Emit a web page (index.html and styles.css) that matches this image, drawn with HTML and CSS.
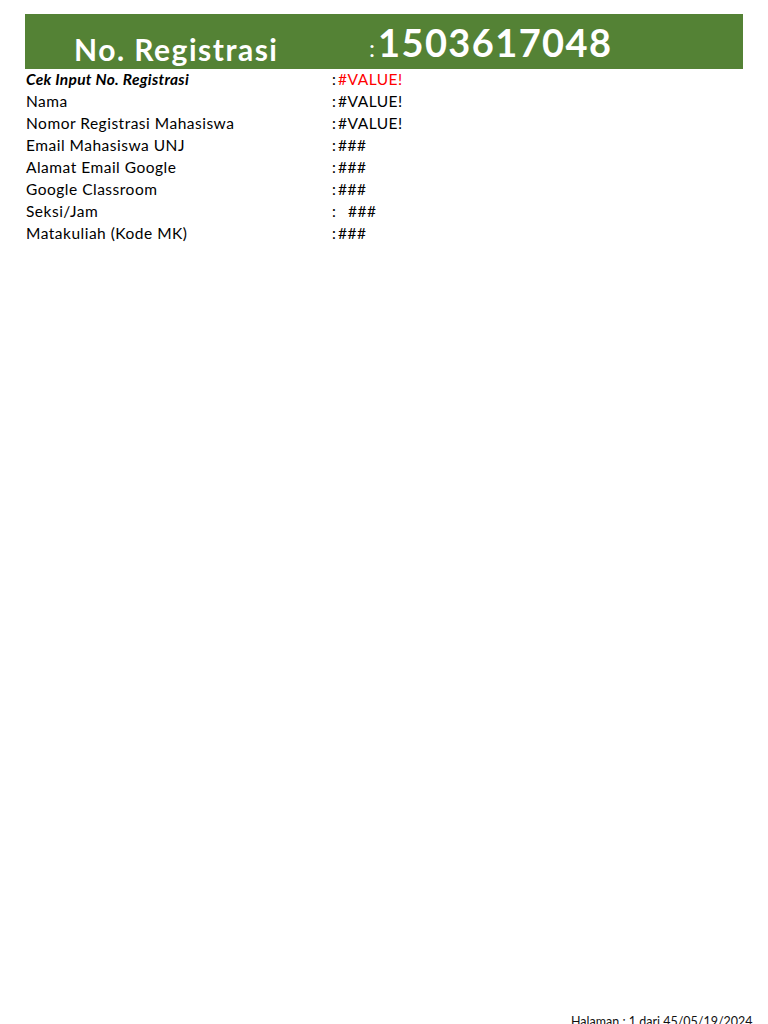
FILE: index.html
```html
<!DOCTYPE html>
<html>
<head>
<meta charset="utf-8">
<link rel="stylesheet" href="styles.css">
</head>
<body>
<div class="page">
  <div class="banner">
    <div class="banner-label">No. Registrasi</div>
    <div class="banner-value"><span class="banner-colon">:</span>1503617048</div>
  </div>
  <div class="rows">
    <div class="row"><span class="label bold-italic">Cek Input No. Registrasi</span><span class="colon">:</span><span class="value error">#VALUE!</span></div>
    <div class="row"><span class="label">Nama</span><span class="colon">:</span><span class="value">#VALUE!</span></div>
    <div class="row"><span class="label">Nomor Registrasi Mahasiswa</span><span class="colon">:</span><span class="value">#VALUE!</span></div>
    <div class="row"><span class="label">Email Mahasiswa UNJ</span><span class="colon">:</span><span class="value">###</span></div>
    <div class="row"><span class="label">Alamat Email Google</span><span class="colon">:</span><span class="value">###</span></div>
    <div class="row"><span class="label">Google Classroom</span><span class="colon">:</span><span class="value">###</span></div>
    <div class="row"><span class="label">Seksi/Jam</span><span class="colon">:</span><span class="value indent">###</span></div>
    <div class="row"><span class="label">Matakuliah (Kode MK)</span><span class="colon">:</span><span class="value">###</span></div>
  </div>
  <div class="spacer"></div>
  <div class="footer">Halaman : 1 dari 45/05/19/2024</div>
</div>
</body>
</html>
```

FILE: styles.css
```css
html, body {
  margin: 0;
  padding: 0;
  background: #ffffff;
}
body {
  font-family: Lato, "Open Sans", "Liberation Sans", sans-serif;
  color: #000000;
  width: 768px;
  height: 1024px;
  overflow: hidden;
}
.page {
  display: flex;
  flex-direction: column;
  height: 1024px;
  padding: 14px 25px 0 25px;
  box-sizing: border-box;
}
.banner {
  background: #548235;
  height: 55px;
  display: flex;
  align-items: flex-end;
  color: #ffffff;
  font-weight: bold;
  width: 718px;
}
.banner-label {
  font-size: 30px;
  letter-spacing: 1.5px;
  padding-left: 49px;
  width: 295px;
  line-height: 1;
  padding-bottom: 5px;
}
.banner-value {
  font-size: 38px;
  line-height: 1;
  padding-bottom: 8px;
  letter-spacing: 1.4px;
}
.banner-colon {
  font-size: 24px;
  font-weight: normal;
  margin-right: 3px;
  letter-spacing: 0;
}
.rows {
  display: flex;
  flex-direction: column;
  margin-top: -1px;
}
.row {
  display: flex;
  height: 22px;
  align-items: center;
  font-size: 15.5px;
  letter-spacing: 0.5px;
  padding-left: 1px;
}
.label {
  width: 306px;
  white-space: nowrap;
}
.bold-italic {
  font-weight: bold;
  font-style: italic;
  letter-spacing: 0.3px;
}
.colon {
  width: 6px;
  letter-spacing: 0;
}
.value {
  white-space: nowrap;
}
.value.indent {
  padding-left: 10px;
}
.error {
  color: #ff0000;
}
.spacer {
  flex: 1;
}
.footer {
  font-size: 12.5px;
  padding-left: 546px;
  height: 14px;
  line-height: 24px;
  overflow: visible;
  white-space: nowrap;
  color: #111111;
}
```
